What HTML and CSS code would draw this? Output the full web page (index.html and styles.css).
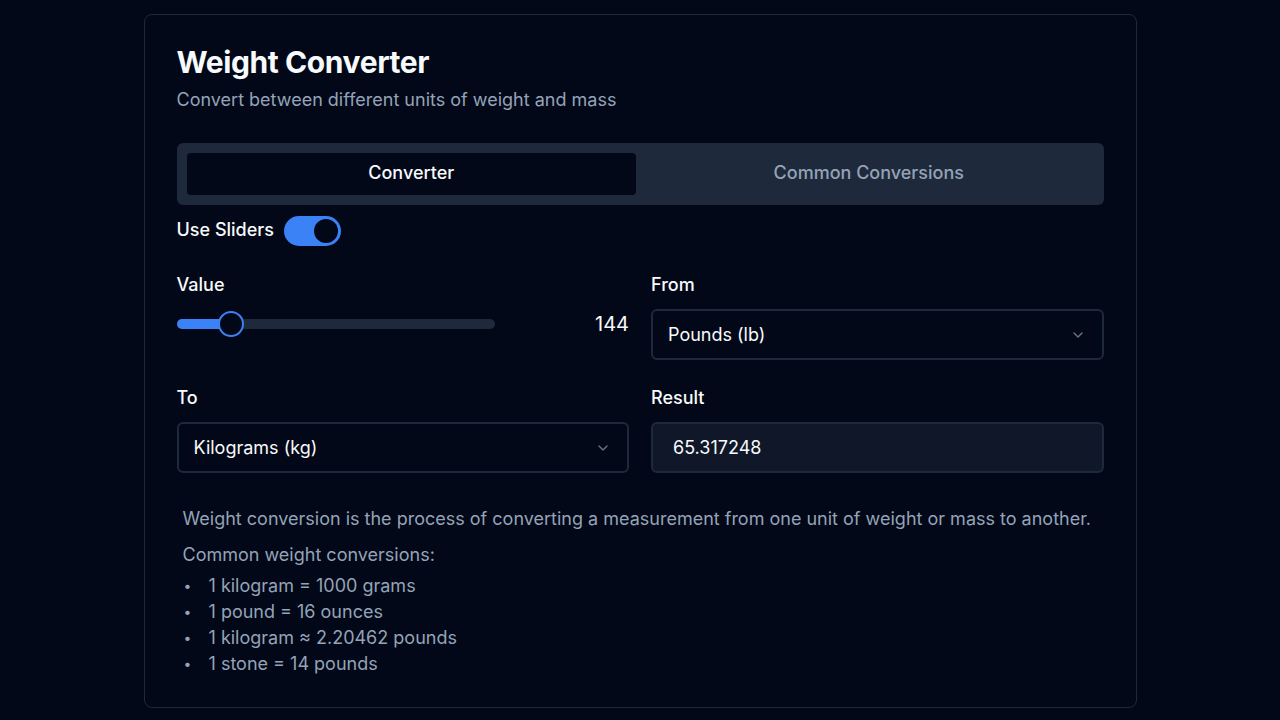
FILE: index.html
```html
<!DOCTYPE html>
<html lang="en">
<head>
  <meta charset="UTF-8" />
  <meta name="viewport" content="width=device-width, initial-scale=1" />
  <title>Weight Converter</title>
  <link rel="stylesheet" href="styles.css">
</head>
<body>

  <div class="card">
    <!-- Header -->
    <h1 class="title">Weight Converter</h1>
    <p class="subtitle">Convert between different units of weight and mass</p>

    <!-- Tabs -->
    <div class="tabs">
      <button class="tab active">Converter</button>
      <button class="tab">Common Conversions</button>
    </div>

    <!-- Slider toggle -->
    <div class="toggle-row">
      <span class="label">Use Sliders</span>
      <div class="switch on"><span class="knob"></span></div>
    </div>

    <!-- Form -->
    <div class="grid">
      <div class="field">
        <span class="label">Value</span>
        <div class="slider-row">
          <div class="slider">
            <div class="slider-fill" style="width: 17%"></div>
            <div class="slider-thumb" style="left: 17%"></div>
          </div>
          <span class="slider-value">144</span>
        </div>
      </div>

      <div class="field">
        <span class="label">From</span>
        <div class="select">
          <span>Pounds (lb)</span>
          <svg class="chevron" viewBox="0 0 24 24" width="16" height="16"><path d="m6 9 6 6 6-6"/></svg>
        </div>
      </div>

      <div class="field">
        <span class="label">To</span>
        <div class="select">
          <span>Kilograms (kg)</span>
          <svg class="chevron" viewBox="0 0 24 24" width="16" height="16"><path d="m6 9 6 6 6-6"/></svg>
        </div>
      </div>

      <div class="field">
        <span class="label">Result</span>
        <div class="result">65.317248</div>
      </div>
    </div>

    <!-- Info -->
    <div class="info">
      <p>Weight conversion is the process of converting a measurement from one unit of weight or mass to another.</p>
      <p class="info-sub">Common weight conversions:</p>
      <ul>
        <li>1 kilogram = 1000 grams</li>
        <li>1 pound = 16 ounces</li>
        <li>1 kilogram ≈ 2.20462 pounds</li>
        <li>1 stone = 14 pounds</li>
      </ul>
    </div>
  </div>

</body>
</html>
```

FILE: styles.css
```css
/* --- Reset & Layout --- */
* {
  box-sizing: border-box;
  margin: 0;
  padding: 0;
}
body {
  font-family: Inter, "Noto Sans", sans-serif;
  background: #020817;
  color: #f8fafc;
  display: flex;
  justify-content: center;
  padding-top: 14px;
}

/* --- Card --- */
.card {
  width: 993px;
  border: 1px solid #1e293b;
  border-radius: 8px;
  padding: 31px 32px 30px;
}

.title {
  font-size: 30px;
  font-weight: 700;
  line-height: 32px;
  letter-spacing: -0.4px;
}

.subtitle {
  margin-top: 9px;
  font-size: 18px;
  line-height: 26px;
  color: #94a3b8;
}

/* --- Tabs --- */
.tabs {
  margin-top: 30px;
  display: grid;
  grid-template-columns: 1fr 1fr;
  gap: 8px;
  background: #1e293b;
  border-radius: 6px;
  padding: 10px;
  height: 62px;
}

.tab {
  font-family: inherit;
  font-size: 18px;
  font-weight: 500;
  border: none;
  background: none;
  color: #94a3b8;
  border-radius: 4px;
  padding-bottom: 3px;
}

.tab.active {
  background: #020817;
  color: #f8fafc;
}

/* --- Switch --- */
.toggle-row {
  margin-top: 11px;
  display: flex;
  align-items: center;
  gap: 10px;
}

.label {
  font-size: 18px;
  font-weight: 500;
  line-height: 24px;
}

.toggle-row .label {
  margin-top: -3px;
}

.switch {
  width: 57px;
  height: 30px;
  border-radius: 15px;
  background: #1e293b;
  padding: 3px;
  display: flex;
}

.switch.on {
  background: #3b82f6;
  justify-content: flex-end;
}

.knob {
  width: 24px;
  height: 24px;
  border-radius: 50%;
  background: #020817;
}

/* --- Form grid --- */
.grid {
  margin-top: 27px;
  display: grid;
  grid-template-columns: 1fr 1fr;
  column-gap: 22px;
  row-gap: 26px;
}

.field {
  display: flex;
  flex-direction: column;
  gap: 12px;
}

.slider-row {
  height: 30px;
  display: flex;
  align-items: center;
}

.slider {
  position: relative;
  width: 318px;
  height: 10px;
  border-radius: 5px;
  background: #1e293b;
}

.slider-fill {
  height: 100%;
  border-radius: 5px;
  background: #3b82f6;
}

.slider-thumb {
  position: absolute;
  top: 50%;
  width: 26px;
  height: 26px;
  margin: -13px 0 0 -13px;
  border-radius: 50%;
  border: 2px solid #3b82f6;
  background: #020817;
}

.slider-value {
  margin-left: auto;
  font-size: 20px;
  font-weight: 400;
}

.select,
.result {
  height: 51px;
  border: 2px solid #1e293b;
  border-radius: 6px;
  font-size: 18px;
  display: flex;
  align-items: center;
}

.select {
  justify-content: space-between;
  padding: 0 16px 0 15px;
}

.chevron {
  fill: none;
  stroke: #94a3b8;
  stroke-width: 2;
  stroke-linecap: round;
  stroke-linejoin: round;
  opacity: 0.7;
}

.result {
  background: #0f1729;
  padding: 0 20px;
}

/* --- Info --- */
.info {
  margin-top: 33px;
  padding-left: 6px;
  color: #94a3b8;
  font-size: 18px;
  line-height: 26px;
}

.info-sub {
  margin-top: 10px;
}

.info ul {
  margin-top: 5px;
  list-style: none;
}

.info li {
  display: flex;
}

.info li::before {
  content: "•";
  width: 25px;
  padding-left: 1px;
  font-size: 14px;
}
```
